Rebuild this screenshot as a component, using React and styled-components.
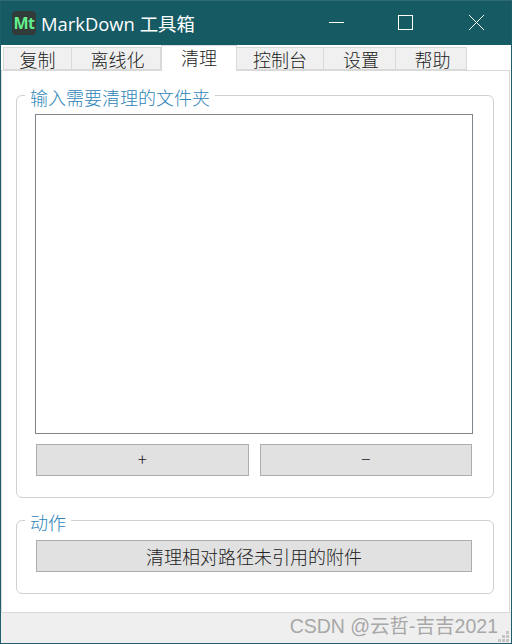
import React from 'react'
import styled, { createGlobalStyle } from 'styled-components'

const GlobalStyle = createGlobalStyle`
  html, body {
    margin: 0;
    padding: 0;
    background: #ffffff;
  }
  * {
    box-sizing: border-box;
  }
`

const FONT = `"Noto Sans CJK SC", "Liberation Serif", serif`

const Window = styled.div`
  width: 512px;
  height: 644px;
  display: flex;
  flex-direction: column;
  border: 1px solid #1f5f69;
  border-top-color: #2f6b74;
  background: #ffffff;
  font-family: ${FONT};
  font-weight: 300;
  overflow: hidden;
`

const TitleBar = styled.div`
  height: 44px;
  flex: none;
  display: flex;
  align-items: center;
  padding: 0 0 1px 11px;
  background: #165a64;
  color: #ffffff;
`

const Logo = styled.div`
  width: 24px;
  height: 24px;
  flex: none;
  border-radius: 4px;
  background: #333a3a;
  color: #62f08e;
  display: flex;
  align-items: center;
  justify-content: center;
  font: bold 16px "Open Sans", sans-serif;
  letter-spacing: -0.5px;
`

const Title = styled.div`
  margin-left: 5px;
  flex: 1;
  font: 400 18.4px "Open Sans", "Noto Sans CJK SC", sans-serif;
  white-space: nowrap;
`

const WinButton = styled.div`
  width: 70px;
  height: 43px;
  flex: none;
  display: flex;
  align-items: center;
  justify-content: center;
`

const TabBar = styled.div`
  height: 25px;
  flex: none;
  display: flex;
  align-items: flex-end;
  padding-left: 2px;
  background: #ffffff;
`

const Tab = styled.div`
  width: ${p => p.$w}px;
  height: ${p => (p.$active ? 26 : 23)}px;
  margin-bottom: ${p => (p.$active ? -1 : 0)}px;
  padding-left: ${p => p.$pad || 0}px;
  padding-bottom: ${p => (p.$active ? 4 : 0)}px;
  position: relative;
  z-index: ${p => (p.$active ? 2 : 1)};
  display: flex;
  align-items: center;
  justify-content: center;
  background: ${p => (p.$active ? '#ffffff' : '#f0f0f0')};
  border: 1px solid #d9d9d9;
  border-left-width: ${p => (p.$first || p.$active ? 1 : 0)}px;
  border-bottom-width: ${p => (p.$active ? 0 : 1)}px;
  color: #222222;
  font-size: 18px;
`

const Pane = styled.div`
  flex: 1;
  margin-right: 1px;
  padding: 24px 15px 0 14px;
  display: flex;
  flex-direction: column;
  gap: 22px;
  border: 1px solid #d9d9d9;
  border-bottom-width: 0;
`

const Group = styled.div`
  position: relative;
  height: ${p => p.$h}px;
  flex: none;
  display: flex;
  flex-direction: column;
  padding: 18px 21px 0 18px;
  border: 1px solid #d0d0d0;
  border-radius: 6px;
`

const Legend = styled.div`
  position: absolute;
  top: -9px;
  left: 8px;
  padding: 0 5px;
  background: #ffffff;
  color: #2f86b8;
  font-size: 18px;
  line-height: 20px;
`

const ListBox = styled.div`
  width: 438px;
  height: 320px;
  flex: none;
  background: #ffffff;
  border: 1px solid #7f878c;
`

const ButtonRow = styled.div`
  margin-top: 10px;
  padding-left: 1px;
  display: flex;
  gap: 11px;
`

const ActionButton = styled.div`
  flex: ${p => (p.$wide ? 'none' : 1)};
  height: 32px;
  margin: ${p => (p.$wide ? '1px 0 0 1px' : 0)};
  padding-bottom: ${p => (p.$wide ? 0 : 3)}px;
  display: flex;
  align-items: center;
  justify-content: center;
  background: #e1e1e1;
  border: 1px solid #adadad;
  color: #222222;
  font-size: ${p => p.$size || 18}px;
`

const StatusBar = styled.div`
  height: 31px;
  flex: none;
  position: relative;
  background: #efefef;
  border-top: 1px solid #d9d9d9;
`

const Watermark = styled.div`
  position: absolute;
  right: 13px;
  top: -3px;
  color: #a8a8a8;
  font: 400 19.5px "Liberation Sans", "Noto Sans CJK SC", sans-serif;
  white-space: nowrap;
`

const Grip = styled.svg`
  position: absolute;
  right: 2px;
  bottom: 1px;
`

const tabs = [
  { label: '复制', w: 69, first: true },
  { label: '离线化', w: 89, pad: 3 },
  { label: '清理', w: 76, active: true },
  { label: '控制台', w: 87 },
  { label: '设置', w: 72, pad: 3 },
  { label: '帮助', w: 71, pad: 3 },
]

const App = () => {
  return (
    <>
      <GlobalStyle />
      <Window>
        <TitleBar>
          <Logo>Mt</Logo>
          <Title>MarkDown 工具箱</Title>
          <WinButton>
            <svg width="16" height="15" viewBox="0 0 16 15">
              <path d="M1 7.5H16" stroke="#fff" strokeWidth="1" fill="none" />
            </svg>
          </WinButton>
          <WinButton>
            <svg width="16" height="15" viewBox="0 0 16 15">
              <rect x="0.5" y="0.5" width="14" height="14" stroke="#fff" fill="none" />
            </svg>
          </WinButton>
          <WinButton>
            <svg width="16" height="15" viewBox="0 0 16 15">
              <path d="M1 0L16 15M16 0L1 15" stroke="#fff" fill="none" />
            </svg>
          </WinButton>
        </TitleBar>

        <TabBar>
          {tabs.map(t => (
            <Tab key={t.label} $w={t.w} $pad={t.pad} $active={t.active} $first={t.first}>
              {t.label}
            </Tab>
          ))}
        </TabBar>

        <Pane>
          <Group $h={403}>
            <Legend>输入需要清理的文件夹</Legend>
            <ListBox />
            <ButtonRow>
              <ActionButton $size={17}>+</ActionButton>
              <ActionButton $size={17}>−</ActionButton>
            </ButtonRow>
          </Group>
          <Group $h={74}>
            <Legend>动作</Legend>
            <ActionButton $wide>清理相对路径未引用的附件</ActionButton>
          </Group>
        </Pane>

        <StatusBar>
          <Watermark>CSDN @云哲-吉吉2021</Watermark>
          <Grip width="11" height="11" viewBox="0 0 11 11">
            <g fill="#c4c4c4">
              <rect x="8" y="0" width="3" height="3" />
              <rect x="4" y="4" width="3" height="3" />
              <rect x="8" y="4" width="3" height="3" />
              <rect x="0" y="8" width="3" height="3" />
              <rect x="4" y="8" width="3" height="3" />
              <rect x="8" y="8" width="3" height="3" />
            </g>
          </Grip>
        </StatusBar>
      </Window>
    </>
  )
}

export default App
